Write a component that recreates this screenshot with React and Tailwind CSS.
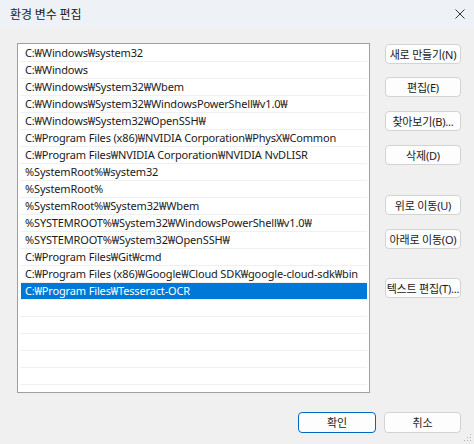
import React from "react";

const paths = [
  "C:₩Windows₩system32",
  "C:₩Windows",
  "C:₩Windows₩System32₩Wbem",
  "C:₩Windows₩System32₩WindowsPowerShell₩v1.0₩",
  "C:₩Windows₩System32₩OpenSSH₩",
  "C:₩Program Files (x86)₩NVIDIA Corporation₩PhysX₩Common",
  "C:₩Program Files₩NVIDIA Corporation₩NVIDIA NvDLISR",
  "%SystemRoot%₩system32",
  "%SystemRoot%",
  "%SystemRoot%₩System32₩Wbem",
  "%SYSTEMROOT%₩System32₩WindowsPowerShell₩v1.0₩",
  "%SYSTEMROOT%₩System32₩OpenSSH₩",
  "C:₩Program Files₩Git₩cmd",
  "C:₩Program Files (x86)₩Google₩Cloud SDK₩google-cloud-sdk₩bin",
  "C:₩Program Files₩Tesseract-OCR",
];

const selected = 14;

function WinButton({ children, className = "", primary = false }) {
  return (
    <button
      className={
        "h-[20px] w-[76px] rounded-[4px] bg-[#fdfdfd] text-[11px] tracking-[-0.2px] text-[#1a1a1a] leading-none whitespace-nowrap overflow-hidden px-0 " +
        (primary ? "border border-[#0067c0] " : "border border-[#d3d3d3] ") +
        className
      }
    >
      {children}
    </button>
  );
}

export default function App() {
  const rows = [...paths];
  while (rows.length < 21) rows.push("");

  return (
    <div
      className="relative w-[474px] h-[444px] bg-[#f0f0f0] overflow-hidden text-[#1a1a1a]"
      style={{ fontFamily: '"Noto Sans", "Noto Sans CJK KR", sans-serif' }}
    >
      {/* title bar */}
      <div className="h-[27px] bg-[#eef2f7] flex items-center justify-between pl-[10px] pr-[9px]">
        <span className="text-[12px]" style={{ fontFamily: '"Noto Sans CJK KR", sans-serif' }}>
          환경 변수 편집
        </span>
        <svg width="10" height="10" viewBox="0 0 10 10">
          <path d="M0.5 0.5 L9.5 9.5 M9.5 0.5 L0.5 9.5" stroke="#333" strokeWidth="1" />
        </svg>
      </div>

      <div className="flex pl-[17px] pt-[16px]">
        {/* list */}
        <div className="w-[353px] h-[350px] border border-[#a0a0a0] bg-white overflow-hidden pt-[1px] px-[2px]">
          {rows.map((p, i) => (
            <div
              key={i}
              className="h-[17px] border-b border-[#f0f0f0] flex items-center"
            >
              <div
                className={
                  "h-[16px] w-full flex items-center pl-[4px] text-[11px] tracking-[-0.15px] whitespace-nowrap overflow-hidden ml-[1px] " +
                  (i === selected ? "bg-[#0078d7] text-white" : "")
                }
              >
                {p}
              </div>
            </div>
          ))}
        </div>

        {/* side buttons */}
        <div className="flex flex-col ml-[15px] pt-[1px]">
          <WinButton>새로 만들기(N)</WinButton>
          <WinButton className="mt-[13px]">편집(E)</WinButton>
          <WinButton className="mt-[14px]">찾아보기(B)...</WinButton>
          <WinButton className="mt-[14px]">삭제(D)</WinButton>
          <WinButton className="mt-[30px]">위로 이동(U)</WinButton>
          <WinButton className="mt-[14px]">아래로 이동(O)</WinButton>
          <WinButton className="mt-[29px]">텍스트 편집(T)...</WinButton>
        </div>
      </div>

      {/* bottom buttons */}
      <div className="flex justify-end gap-[8px] pr-[13px] mt-[19px]">
        <WinButton primary className="w-[78px] h-[21px]">확인</WinButton>
        <WinButton className="w-[77px] h-[21px]">취소</WinButton>
      </div>

      {/* resize grip */}
      <svg className="absolute right-[2px] bottom-[2px]" width="8" height="8" viewBox="0 0 8 8">
        <rect x="6" y="0" width="1" height="1" fill="#b0b0b0" />
        <rect x="6" y="3" width="1" height="1" fill="#b0b0b0" />
        <rect x="3" y="3" width="1" height="1" fill="#b0b0b0" />
        <rect x="6" y="6" width="1" height="1" fill="#b0b0b0" />
        <rect x="3" y="6" width="1" height="1" fill="#b0b0b0" />
        <rect x="0" y="6" width="1" height="1" fill="#b0b0b0" />
      </svg>
    </div>
  );
}
